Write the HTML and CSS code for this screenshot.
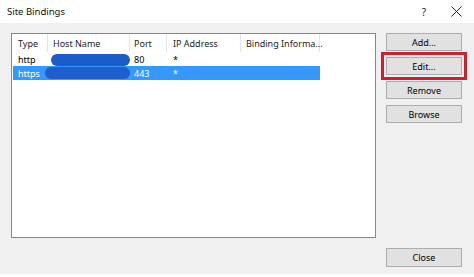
FILE: index.html
```html
<!DOCTYPE html>
<html>
<head>
<meta charset="utf-8">
<link rel="stylesheet" href="styles.css">
</head>
<body>
<div class="window">
  <div class="titlebar">
    <span class="title">Site Bindings</span>
    <span class="help">?</span>
    <svg class="close-x" width="11" height="11" viewBox="0 0 11 11"><path d="M0.5 0.5 L10.5 10.5 M10.5 0.5 L0.5 10.5" stroke="#222" stroke-width="1" fill="none"/></svg>
  </div>
  <div class="content">
    <div class="main">
      <div class="listbox">
        <div class="row header">
          <div class="c c-type">Type</div>
          <div class="c c-host">Host Name</div>
          <div class="c c-port">Port</div>
          <div class="c c-ip">IP Address</div>
          <div class="c c-bind">Binding Informa...</div>
        </div>
        <div class="row">
          <div class="c c-type">http</div>
          <div class="c c-host"><span class="blob blob1"></span></div>
          <div class="c c-port">80</div>
          <div class="c c-ip">*</div>
          <div class="c c-bind"></div>
        </div>
        <div class="row selected">
          <div class="c c-type">https</div>
          <div class="c c-host"><span class="blob blob2"></span></div>
          <div class="c c-port">443</div>
          <div class="c c-ip">*</div>
          <div class="c c-bind"></div>
        </div>
      </div>
      <div class="buttons">
        <button class="btn">Add...</button>
        <button class="btn btn-hl">Edit...</button>
        <button class="btn">Remove</button>
        <button class="btn">Browse</button>
      </div>
    </div>
    <div class="footer">
      <button class="btn">Close</button>
    </div>
  </div>
</div>
</body>
</html>
```
FILE: styles.css
```css
* { box-sizing: border-box; }
html, body { margin: 0; padding: 0; }
body {
  width: 474px;
  height: 277px;
  background: #ffffff;
  font-family: "Noto Sans", "Open Sans", sans-serif;
  font-size: 9px;
  color: #000;
  overflow: hidden;
}
.window { width: 474px; height: 274px; display: flex; flex-direction: column; }
.titlebar {
  height: 23px;
  background: #fff;
  display: flex;
  align-items: center;
  padding-left: 7px;
  flex: none;
}
.title { font-size: 9.5px; color: #111; flex: 1; }
.help { font-size: 10px; color: #222; margin-right: 25px; }
.close-x { margin-right: 12px; }
.content {
  flex: 1;
  background: #f0f0f0;
  display: flex;
  flex-direction: column;
  padding: 10px 12px 0 11px;
}
.main { display: flex; gap: 10px; }
.listbox {
  width: 366px;
  height: 205px;
  background: #fff;
  border: 1px solid #828790;
  padding: 0 0 0 1px;
}
.row { display: flex; height: 14px; align-items: center; width: 307px; }
.row.header { height: 18px; }
.row.header .c { border-right: 1px solid #e5e5e5; height: 18px; display: flex; align-items: center; color: #222; }
.c { padding-left: 5px; white-space: nowrap; overflow: visible; height: 14px; display: flex; align-items: center; }
.c-type { width: 35px; }
.c-host { width: 82px; }
.c-port { width: 37px; padding-left: 4px; }
.c-ip { width: 74px; padding-left: 6px; }
.c-bind { width: 79px; }
.row.selected { background: #3399ff; color: #fff; }
.blob {
  display: block;
  height: 12px;
  border-radius: 6px;
  background: #1c5cc8;
}
.blob1 { width: 84px; margin-left: -2px; margin-top: 2px; }
.blob2 { width: 90px; margin-left: -8px; background: #1f5fcd; }
.buttons { display: flex; flex-direction: column; gap: 6px; }
.btn {
  width: 76px;
  height: 18px;
  background: #e1e1e1;
  border: 1px solid #adadad;
  font-family: "Noto Sans", "Open Sans", sans-serif;
  font-size: 9px;
  color: #000;
  padding: 0;
}
.btn-hl { outline: 3px solid #d0202e; outline-offset: 2px; }
.footer { display: flex; justify-content: flex-end; padding-top: 10px; }
.footer .btn { height: 19px; }
```
